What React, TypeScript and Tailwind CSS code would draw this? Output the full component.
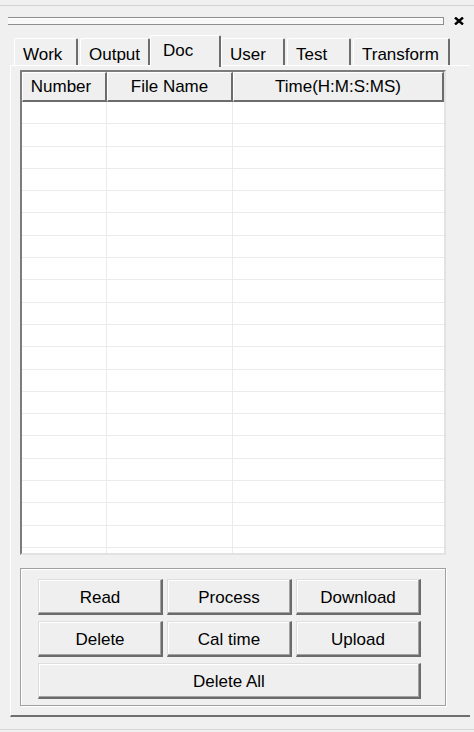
import React from "react";

const tabs = [
  { label: "Work", w: "w-[64px] ml-[14px]" },
  { label: "Output", w: "w-[70px] ml-[2px]" },
  { label: "Doc", w: "w-[71px]", active: true },
  { label: "User", w: "w-[64px]" },
  { label: "Test", w: "w-[64px] ml-[2px]" },
  { label: "Transform", w: "w-[97px] ml-[2px]" },
];

const rows = Array.from({ length: 20 }, (_, i) => i);

function Btn({ label, wide }: { label: string; wide?: boolean }) {
  return (
    <button
      className={`h-[36px] flex items-center justify-center pt-[2px] leading-[20px] bg-[#efefef] border-t border-l border-[#dedede] border-r-2 border-b-2 border-r-[#6b6b6b] border-b-[#6b6b6b] shadow-[inset_-1px_-1px_0_#a3a3a3,inset_1px_1px_0_#ffffff] ${wide ? "col-span-3" : ""}`}
    >
      {label}
    </button>
  );
}

export default function App() {
  return (
    <div className="w-[474px] h-[732px] bg-[#f0f0f0] overflow-hidden flex flex-col text-[17px] text-black font-['Liberation_Sans',Arial,sans-serif]">
      {/* top edge */}
      <div className="mt-[5px] h-px bg-[#d2d2d2]" />

      {/* gripper + close */}
      <div className="h-[29px] flex items-center pl-[8px] pr-[10px]">
        <div className="flex-1 h-[8px] border-y border-r border-[#8e8e8e] bg-[#f8f8f8] shadow-[inset_0_1px_0_#ffffff]" />
        <svg width="10" height="8" viewBox="0 0 10 8" className="ml-[10px]">
          <path d="M1 0.5 L9 7.5 M9 0.5 L1 7.5" stroke="#000" strokeWidth="2.4" />
        </svg>
      </div>

      {/* tabs */}
      <div className="h-[32px] flex items-start -mb-[2px] relative z-10">
        {tabs.map((t) =>
          t.active ? (
            <div
              key={t.label}
              className={`${t.w} h-[32px] pl-[12px] pt-[5px] leading-[20px] bg-[#f0f0f0] border-t border-l border-white border-r-2 border-r-[#6d6d6d] rounded-t-[2px]`}
            >
              {t.label}
            </div>
          ) : (
            <div
              key={t.label}
              className={`${t.w} mt-[3px] h-[27px] pl-[8px] pt-[6px] leading-[20px] bg-[#f0f0f0] border-t border-l border-white border-r-2 border-r-[#6d6d6d] rounded-t-[2px]`}
            >
              {t.label}
            </div>
          )
        )}
      </div>

      {/* tab panel */}
      <div className="ml-[10px] w-[460px] h-[652px] border-l border-t border-white border-b-2 border-b-[#6f6f6f] pl-[9px] pt-[4px]">
        {/* list view */}
        <div className="w-[426px] h-[485px] flex flex-col bg-white border-2 border-t-[#7c7c7c] border-l-[#7c7c7c] border-r-[#e2e2e2] border-b-[#e2e2e2]">
          <div className="h-[30px] flex shrink-0">
            {[
              { label: "Number", w: "w-[85px] pr-[6px]" },
              { label: "File Name", w: "w-[126px]" },
              { label: "Time(H:M:S:MS)", w: "flex-1" },
            ].map((h) => (
              <div
                key={h.label}
                className={`${h.w} flex items-center justify-center leading-[20px] bg-[#efefef] border-t border-l border-white border-r-2 border-b-2 border-r-[#6c6c6c] border-b-[#6c6c6c]`}
              >
                {h.label}
              </div>
            ))}
          </div>
          {rows.map((r) => (
            <div key={r} className="h-[22.3px] grid grid-cols-[85px_126px_1fr] shrink-0">
              <div className="border-r border-b border-[#ebebeb]" />
              <div className="border-r border-b border-[#ebebeb]" />
              <div className="border-b border-[#ebebeb]" />
            </div>
          ))}
          <div className="flex-1 grid grid-cols-[85px_126px_1fr]">
            <div className="border-r border-[#ebebeb]" />
            <div className="border-r border-[#ebebeb]" />
            <div />
          </div>
        </div>

        {/* button group */}
        <div className="mt-[13px] w-[426px] h-[138px] border border-[#a0a0a0] shadow-[inset_1px_1px_0_#ffffff,1px_1px_0_#ffffff] pl-[17px] pt-[10px]">
          <div className="grid grid-cols-[125px_125px_125px] gap-x-[4px] gap-y-[6px]">
            <Btn label="Read" />
            <Btn label="Process" />
            <Btn label="Download" />
            <Btn label="Delete" />
            <Btn label="Cal time" />
            <Btn label="Upload" />
            <Btn label="Delete All" wide />
          </div>
        </div>
      </div>

      <div className="mt-[12px] h-px bg-[#d8d8d8]" />
    </div>
  );
}
